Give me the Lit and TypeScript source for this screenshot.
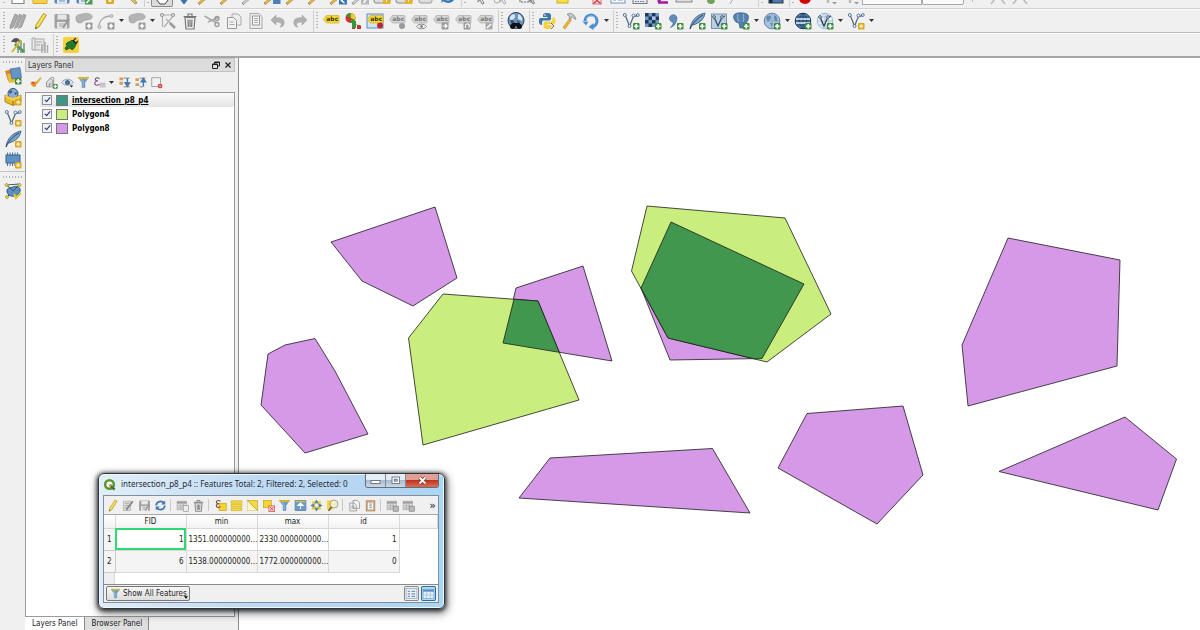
import { LitElement, html, svg, css, nothing, TemplateResult } from "lit";
import { customElement, property, state } from "lit/decorators.js";

type Art = TemplateResult<2>;

/* ---------- shared icon parts (18 x 18 grid) ---------- */
const plus = svg`<rect x="11" y="11" width="6.500" height="6.500" rx="1" fill="#3d8b3d"/><path d="M14.250 12v4.500M12 14.250h4.500" stroke="#fff" stroke-width="1.700"/>`;
const star = svg`<rect x="11" y="11" width="6.500" height="6.500" rx="1" fill="#d8a41c"/><path d="M14.250 12v4.500M12 14.250h4.500M12.700 12.700l3 3M15.700 12.700l-3 3" stroke="#fff3c0" stroke-width=".9"/>`;
const greyPlus = svg`<rect x="10.500" y="10.500" width="7" height="7" rx="1" fill="#9a9a9a"/><path d="M14 11.800v4.400M11.800 14h4.400" stroke="#fff" stroke-width="1.700"/>`;
const vee = svg`<path d="M3.500 4 7.500 14 11.500 4.500 16 3.500" fill="none" stroke="#5a6c80" stroke-width="1.3"/><g fill="#eef4fa" stroke="#456a92" stroke-width=".9"><circle cx="2.800" cy="3" r="1.500"/><circle cx="7.500" cy="14" r="1.500"/><circle cx="11.500" cy="3.600" r="1.500"/><circle cx="15.800" cy="3" r="1.400"/></g>`;
const tag = (fill: string, ink: string, edge: string) => svg`<path d="M1.500 7.500 4.500 3.500H16a1 1 0 0 1 1 1V10a1 1 0 0 1-1 1H4.500z" fill="${fill}" stroke="${edge}" stroke-width=".7"/><text x="4.300" y="9.400" font-family="DejaVu Sans, sans-serif" font-weight="bold" font-size="6" fill="${ink}">abc</text>`;
const greyTag = tag("#d4d4d4", "#777", "#aaa");
const globe = (fill: string, line: string) => svg`<circle cx="9" cy="9" r="7.800" fill="${fill}" stroke="${line}"/><path d="M1.500 9h15M9 1.200v15.600M3 5h12M3 13h12M9 1.200c-5 4-5 11.600 0 15.600M9 1.200c5 4 5 11.600 0 15.600" fill="none" stroke="${line}" stroke-width=".9"/>`;
const pencil = (body: string, tip: string) => svg`<path d="M12.500 1.500 15.500 3 8 15 4.500 17 4.800 13.200z" fill="${body}" stroke="${tip}" stroke-width=".7"/><path d="m4.500 17 .2-2 1.500.9z" fill="#444"/><path d="M13.500 2.500 6.300 14.200" stroke="#fff6b0" stroke-width=".7"/>`;
const lens = (color: string) => svg`<circle cx="11" cy="6" r="5" fill="#eef" stroke="#888"/><path d="m8.500 11-7 6" stroke="#777" stroke-width="2.500"/><path d="m9 10.500-7 6" stroke="${color}" stroke-width="2"/>`;
const funnel = svg`<path d="M2 2h14l-5 7v7H7V9z" fill="#6b9ccb" stroke="#4c7aa6" stroke-width=".6"/><path d="M1.500 1.500h15l-1 2.500h-13z" fill="#d7b62c"/><path d="m6 4 2.500 5v6.500" fill="none" stroke="#a9c9e8"/>`;
const floppy = (c: string, l: string) => svg`<rect x="1.500" y="2" width="15" height="14.500" rx="1.500" fill="${c}"/><rect x="4.500" y="2.500" width="9" height="5" fill="${l}"/><rect x="4" y="10" width="10" height="6.500" fill="${l}"/><path d="M6 12h6M6 14h6" stroke="${c}"/>`;
const bin = svg`<path d="M4 5.500h10l-1 11.500H5z" fill="#eee" stroke="#777" stroke-width="1.200"/><path d="M2.500 4.500h13M7 4V2h4v2M7 7.500l.4 7.500M9 7.500V15M11 7.500l-.4 7.500" fill="none" stroke="#777" stroke-width="1.200"/>`;
const page = svg`<path d="M3 1.500h9l3 3v12H3z" fill="#eee" stroke="#aaa"/>`;
const blob = svg`<path d="M1 6c0-4 4-3 6-4s9-1 10 2-3 4-6 4-3 3-6 3-4-2-4-5z" fill="#b4b4b4" stroke="#959595" stroke-width=".6"/>`;
const sheet = svg`<rect x="1.500" y="3" width="13" height="12" fill="#ddd" stroke="#aaa"/><path d="M1.500 5h13" stroke="#999" stroke-width="2.500"/><path d="M2 9.500h12M2 12.500h12M6 6v9M10 6v9" stroke="#aaa"/>`;
const elephant = svg`<path d="M2 3c2-3 11-3 14 0 1 3 0 6-2 8l-2-1-1 6H8l-1-5-3-1C2 8 1 5 2 3z" fill="#5682b0" stroke="#2c537e" stroke-width=".7"/><path d="M6 2c-1 3 0 6 1 8M11 2c1 3 1 5 0 8" fill="none" stroke="#a5c6e6" stroke-width=".8"/>`;
const feather = svg`<path d="M2 17C3 9 8 3 17 1c-1 7-6 10-12 12" fill="#7ea5c9" stroke="#3a5f85" stroke-width=".9"/><path d="M2 17C5 10 10 6 15 3" fill="none" stroke="#27445f"/>`;

const icons: Record<string, Art> = {
  page: svg`<path d="M3 1h12v15.500H3z" fill="#fff" stroke="#888" stroke-width="1.200"/>`,
  folder: svg`<path d="M2 5h14v11.500H2z" fill="#f6d04d" stroke="#d5a928"/>`,
  save: floppy("#5b88b5", "#e5eef6"),
  saveAs: svg`${floppy("#5b88b5", "#e5eef6")}<rect x="10" y="10" width="7.500" height="7.500" fill="#4a9a50"/><path d="m11.500 16 4.500-5" stroke="#fff" stroke-width="1.500"/>`,
  layout: svg`<rect x="6" y="4" width="8" height="13" rx="1.500" fill="#d9a92a"/><rect x="8.500" y="12" width="3" height="3" fill="#fff2bd"/>`,
  brush: svg`<path d="m4 8 9 9 2-1L7 5z" fill="#e4c25c" stroke="#8c7a40" stroke-width=".7"/>`,
  hand: svg`<path d="M3 9h12v4l-3 4H7l-4-5z" fill="#fff" stroke="#444"/>`,
  pan: svg`<path d="M9 5v9M6 13h6l-3 4z" fill="#3a71b0" stroke="#3a71b0"/>`,
  zoomY: lens("#f1b530"), zoomG: lens("#ccc"),
  zoomB: svg`${lens("#f1b530")}<rect x="10" y="9" width="7.500" height="8" fill="#4d80b8"/>`,
  zoomP: svg`${lens("#f1b530")}<rect x="10" y="9" width="8" height="8.500" fill="#3c75b0"/><path d="m15.500 11-3 2.500 3 2.500" stroke="#fff" stroke-width="1.500" fill="none"/>`,
  zoomN: svg`${lens("#ccc")}<rect x="10" y="9" width="8" height="8.500" fill="#b8b8b8"/><path d="m12.500 16 3-4" stroke="#fff" stroke-width="1.500" fill="none"/>`,
  book: svg`<rect x="1" y="8" width="16" height="8" rx="2" fill="#ddd" stroke="#888"/><rect x="10" y="9" width="7.500" height="8" fill="#e1b431"/><path d="M13.500 11v3.500" stroke="#fff"/>`,
  pill: svg`<rect x="2" y="8" width="13" height="8" rx="2" fill="#ddd" stroke="#999"/>`,
  refresh: svg`<path d="M3 9a6 6 0 0 1 11-3M15 9a6 6 0 0 1-11 3" fill="none" stroke="#3e78b4" stroke-width="2.500"/><path d="M15.500 2v5.500H10zM2.500 16v-5.500H8z" fill="#3e78b4"/>`,
  cursor: svg`<path d="m8 5 7 7-3 .3 2 4-2 .8-2-4-2 2z" fill="#eee" stroke="#777" stroke-width=".9"/>`,
  cursorG: svg`<path d="m8 5 7 7-3 .3 2 4-2 .8-2-4-2 2z" fill="#eee" stroke="#aaa" stroke-width=".9"/><circle cx="5" cy="13" r="3" fill="none" stroke="#aaa"/>`,
  select: svg`<path d="M1 7v8h12" fill="none" stroke="#666" stroke-dasharray="2 1"/><path d="m10 6 6 6-2.500.3 2 4-1.500.7-2-4-2 1.500z" fill="#fff" stroke="#666" stroke-width=".9"/>`,
  yellow: svg`<rect x="3" y="6" width="11" height="10" fill="#f8e03d" stroke="#c9ac2a"/>`,
  noSel: svg`<path d="m6 10 8 7M14 10l-8 7" stroke="#dc3440" stroke-width="1.500"/><rect x="6" y="9.500" width="8" height="7.500" fill="none" stroke="#e06a72"/>`,
  grid: svg`<rect x="2" y="4" width="14" height="12" fill="#fff" stroke="#6d93bd"/><path d="M4 10h3M9 10h5M4 13h3M9 13h5" stroke="#6d93bd"/>`,
  calc: svg`<rect x="2" y="4" width="14" height="12.500" fill="#e7edf3" stroke="#777"/><path d="M4 12h10M4 14.500h10" stroke="#58738e" stroke-dasharray="1.500 1"/>`,
  sigma: svg`<path d="M5 15.500h10M5 15l5-6" stroke="#a514a8" stroke-width="2.500"/>`,
  ruler: svg`<rect x="1" y="8" width="16" height="7" fill="#ddd" stroke="#888"/>`,
  tip: svg`<circle cx="9" cy="13" r="4" fill="#6ba45b"/><path d="M6 8h7v6z" fill="#e5c238"/>`,
  note: svg`<path d="M5 9h10l-6 3-3 5" fill="#eee" stroke="#aaa"/>`,
  help: svg`<rect x="2" y="3" width="14" height="13" fill="#4c78ac" stroke="#26384e"/><path d="M4 3v13" stroke="#1d2b3a" stroke-width="3"/>`,
  red: svg`<circle cx="7" cy="11" r="6" fill="#d40000"/>`,
  pinG: svg`<path d="M8 8v8" stroke="#bbb" stroke-width="2.500"/><path d="M12 15h5l-2.500 2.500z" fill="#999"/>`,
  tent: svg`<path d="m2 17 7-9 7 9" fill="none" stroke="#bbb" stroke-width="1.500"/>`,

  edits: svg`<path d="m6 2 3 1.500L4.500 15 1 16.500 1.500 13zM10 2l3 1.500L8.500 15 5 16.500M14 2l3 1.500L12.500 15 9 16.500" fill="#aaa" stroke="#888" stroke-width=".7"/>`,
  pencil: pencil("#f3d32d", "#98843a"),
  saveG: svg`${floppy("#a2a2a2", "#e8e8e8")}<path d="m10 16 6-9" stroke="#999" stroke-width="2"/>`,
  addPoly: svg`${blob}${greyPlus}`,
  addCurve: svg`<path d="M2 15C2 8 7 4 14 4" fill="none" stroke="#aaa" stroke-width="1.300"/><circle cx="2.500" cy="15" r="1.500" fill="#ddd" stroke="#aaa"/><circle cx="14.500" cy="4" r="1.500" fill="#ddd" stroke="#aaa"/>${greyPlus}`,
  vertex: svg`<path d="M2 3h12M3.500 3v12M5 15l9-11M7 7l5 5" stroke="#b0b0b0" stroke-width="1.200"/><circle cx="3" cy="3" r="1.600" fill="#ddd" stroke="#999"/><circle cx="14" cy="3" r="1.600" fill="#ddd" stroke="#999"/><path d="m11 11 5 5" stroke="#999" stroke-width="2.500"/>`,
  bin,
  cut: svg`<path d="m1.500 4 12 7M16 5 5 10" stroke="#aaa" stroke-width="1.800"/><circle cx="14" cy="12.500" r="2" fill="none" stroke="#999" stroke-width="1.300"/><circle cx="14" cy="6.500" r="2" fill="none" stroke="#999" stroke-width="1.300"/>`,
  copy: svg`<path d="M7 2h6l3 3v8H7z" fill="#eee" stroke="#aaa"/><path d="M2.500 5.500h6l3 3v8h-9z" fill="#f2f2f2" stroke="#999"/><path d="M4.500 10h4M4.500 12.500h5" stroke="#aaa"/>`,
  paste: svg`${page}<rect x="5.500" y="4" width="7" height="9" fill="#f6f6f6" stroke="#999"/><path d="M7 6.500h4M7 8.500h4M7 10.500h4" stroke="#aaa"/>`,
  undo: svg`<path d="M7 3v3c6-1 9 2 8 6-.5 2-2 3-4 3 3-3 1-5-4-5v3L2 8z" fill="#b0b0b0" stroke="#999" stroke-width=".5"/>`,
  redo: svg`<path d="M11 3v3C5 5 2 8 3 12c.5 2 2 3 4 3-3-3-1-5 4-5v3l5-5z" fill="#b0b0b0" stroke="#999" stroke-width=".5"/>`,
  label: tag("#f4d834", "#3a3208", "#cfae20"),
  diagram: svg`<path d="M8 11v6h3v-4h3v4h3v-3" fill="#d02a2a"/><rect x="8" y="9" width="4" height="7" fill="#2f9a3c"/><rect x="13" y="13" width="3.500" height="4" fill="#cf2d2d"/><circle cx="6.500" cy="6" r="5" fill="#d83131"/><path d="M6.500 6V1a5 5 0 0 1 4.500 7z" fill="#e9d02f"/><path d="M6.500 6 2 3.500A5 5 0 0 1 6.500 1z" fill="#2f9a3c"/><path d="M6.500 6 11 8a5 5 0 0 1-4 3z" fill="#2f9a3c"/>`,
  labelPin: svg`<rect x="1" y="2" width="16" height="14" fill="#d5e4f6" stroke="#5d8cc8"/>${tag("#f4d834", "#3a3208", "#cfae20")}<circle cx="14" cy="13.500" r="3" fill="#c3262a"/>`,
  labelDot: svg`${greyTag}<circle cx="14" cy="14" r="3" fill="#999"/>`,
  labelEye: svg`${greyTag}<path d="M6.500 14.500c2-3 8-3 10 0-2 3-8 3-10 0z" fill="#eee" stroke="#888"/><circle cx="11.500" cy="14.500" r="1.300" fill="#777"/>`,
  labelMove: svg`${greyTag}<rect x="9.500" y="10.500" width="7" height="7" rx="1" fill="#999"/><path d="M10.500 14h4m-1.500-2 2 2-2 2" fill="none" stroke="#fff" stroke-width="1.200"/>`,
  labelTurn: svg`${greyTag}<rect x="9.500" y="10.500" width="7" height="7" rx="1" fill="#999"/><path d="M11.500 16v-1.500a2 2 0 1 1 3 1" fill="none" stroke="#fff" stroke-width="1.200"/>`,
  labelEdit: svg`${greyTag}<rect x="9.500" y="10.500" width="7" height="7" rx="1" fill="#aaa"/><path d="m11 16 4-4" fill="none" stroke="#fff" stroke-width="1.500"/>`,
  search: svg`<circle cx="9" cy="8.500" r="8" fill="#6f95bd" stroke="#24415f"/><path d="M3 5c2-4 6-3 5 0s-4 4-5 2zM11 2c3 1 5 4 4 7l-4-2z" fill="#d6e5f2"/><path d="M3 8h3l2 3-3 2zM10 8l3 2-2 3z" fill="#35557a"/><path d="M3 14.500 5.500 11h7l2.500 3.500z" fill="#111"/><circle cx="5.500" cy="14.500" r="2.500" fill="#111"/><circle cx="12.500" cy="14.500" r="2.500" fill="#111"/>`,
  python: svg`<path d="M9 1c-4 0-4 1.500-4 4h4.500v1H3C1 6 .8 8 1 10s1 3 3 3V10.500C4 9 5 8.500 6 8.500h5c1.500 0 2-1 2-2V3c0-1.500-2-2-4-2z" fill="#3c78ad"/><path d="M9.500 17c4 0 4-1.500 4-4H9v-1h6.500c2 0 2.200-2 2-4s-1-3-3-3v2.500c0 1.500-1 2-2 2h-5c-1.500 0-2 1-2 2V15c0 1.500 2 2 4 2z" fill="#f5d243"/><circle cx="7" cy="3" r=".8" fill="#fff"/><path d="m13 11 3 3-3 3" stroke="#776a30" fill="none"/>`,
  hammer: svg`<path d="M9.500 6.500 11.500 8 5 17 3 15.500z" fill="#efb42e" stroke="#a87a20" stroke-width=".5"/><path d="M7 2.500C9.500.5 12 1 14.500 4l1.500 3-1 .5-3-3-1.500 2.500-1.500-1 .5-2z" fill="#c9c9c9" stroke="#777" stroke-width=".7"/>`,
  spin: svg`<path d="M3 9a6 6 0 1 1 7 6" fill="none" stroke="#4e8ed0" stroke-width="3"/><path d="m11.500 11-5 4 5 3z" fill="#4e8ed0"/><path d="M.5 9.500h6l-2.500 4z" fill="#4e8ed0"/><path d="M4.500 7A5 5 0 0 1 13 6" fill="none" stroke="#a8cdf0" stroke-width="1"/>`,
  addVec: svg`${vee}${plus}`,
  addRas: svg`<rect x="1" y="1" width="14" height="14" fill="#6f99c4"/><path d="M1 1h3.500v3.500H1zM8 1h3.500v3.500H8zM4.500 4.500H8V8H4.500zM11.500 4.500H15V8h-3.500zM1 8h3.500v3.500H1zM8 8h3.500v3.500H8zM4.500 11.500H8V15H4.500z" fill="#1f3858"/><path d="M8 4.500h3.500V8H8z" fill="#a9c5e0"/>${plus}`,
  addCsv: svg`<path d="M3.500 6a3.800 3.800 0 1 1 7 2.500c-.5 3-2.500 6-6 7 2-2 3-4 2.500-5.500C5 10 3.500 8.500 3.500 6z" fill="#5f8cba" stroke="#37618e" stroke-width=".6"/>${plus}`,
  addFeather: svg`${feather}${plus}`,
  addVirt: svg`<rect x="1.500" y="2" width="15" height="14.500" fill="#b9cfe3" stroke="#7892ab"/><path d="m4 5 4 9 4-9 3-1" fill="none" stroke="#32506f" stroke-width="1.300"/><circle cx="4" cy="5" r="1.300" fill="#fff" stroke="#456"/><circle cx="12" cy="5" r="1.300" fill="#fff" stroke="#456"/>${plus}`,
  addPg: svg`${elephant}${plus}`,
  addWms: svg`<circle cx="9" cy="9" r="7.800" fill="#a9c3dd" stroke="#5e86b0"/><path d="M3 6c1-3 5-3 5-1S6 9 5 10zM11 3c3 1 4 4 3 6s-3-1-3-3zM7 11h3l-1 4z" fill="#6489b0"/><path d="M1.500 9h15M9 1.500v15" stroke="#7fa2c6" stroke-width=".7"/>${plus}`,
  addWcs: svg`${globe("#5f8cba", "#1b3a5d")}<path d="M2 7h14M2 11h14" stroke="#dce9f5" stroke-width="1.500"/>${plus}`,
  addWfs: svg`${globe("#e9f0f8", "#9fbddb")}<path d="m4 5 4 9 4-9 3-1" fill="none" stroke="#34404c" stroke-width="1.300"/><circle cx="4" cy="5" r="1.300" fill="#fff" stroke="#456"/><circle cx="12" cy="5" r="1.300" fill="#fff" stroke="#456"/>${plus}`,
  newVec: svg`${vee}${star}`,
  tools: svg`<path d="m6 8 9 8" stroke="#4d8a4d" stroke-width="3"/><path d="M12 5v12M15 7v10M9 9v8" stroke="#6d9c75" stroke-width="1.500"/><path d="m12 4-9 12" stroke="#d4b62c" stroke-width="2"/><path d="M2 6c2-4 5-5 8-3l1 3-2-1-2 2-2-1z" fill="#555"/>`,
  toolsG: svg`<path d="M1 2h3v12H1zM4 3h9v11H4" fill="#e6e6e6" stroke="#aaa"/><path d="M5 6h6M5 9h4" stroke="#aaa"/><path d="M11 8v9M14 6v11M16.500 9v8" stroke="#aaa" stroke-width="1.500"/>`,
  plug: svg`<rect x="1" y="1" width="16" height="16" rx="2" fill="#f4d23b"/><path d="m12 4 2-2M14 7l2-2" stroke="#333" stroke-width="1.300"/><path d="M4 8c1-2 4-2 6-4l4 4c-1 3-2 5-4 6L8 12l-4 2-1-2 2-2z" fill="#1d7c2f" stroke="#0e4519" stroke-width=".7"/><path d="m11 4 3.500 4" stroke="#222" stroke-width="1.500"/>`,

  layers: svg`<path d="m1 4 8-2 3 10-8 2z" fill="#d9822b"/><path d="m3 7 8-1 1 9-7 1z" fill="#e8bd32"/><path d="m6 2 10-1.500 1.500 10L8 12z" fill="#6794c5" stroke="#3f6a98" stroke-width=".7"/>${plus}`,
  geopkg: svg`<path d="m1 7 8 3 8-3v7l-8 3.500L1 14z" fill="#e9b926" stroke="#8f6e14" stroke-width=".7"/><path d="M9 10v7.500" stroke="#8f6e14"/><circle cx="9" cy="5.500" r="5" fill="#8aaed2" stroke="#2f5379"/><path d="M5 4c1-2 4-2 3 0s-2 2-3 0zM10 5l3-1-1 3z" fill="#2f5379"/><path d="m1 7 8 3 8-3-1 3-7 3-7-3z" fill="#f5cf48"/>${star}`,
  newFeather: svg`${feather}${star}`,
  chip: svg`<rect x="2" y="4" width="14" height="8" fill="#6190c2" stroke="#3b638d"/><path d="M3.500 1.500v3M6 1.500v3M8.500 1.500v3M11 1.500v3M13.500 1.500v3M3.500 12v3M6 12v3M8.500 12v3M11 12v3" stroke="#47719c"/>${star}`,
  topo: svg`<path d="M2.500 3 15.500 2M3 15l6-6" fill="none" stroke="#555"/><path d="M3 9c0-4 4-3 6-4s6-1 7 2-2 6-6 7-7-2-7-5z" fill="#5d8fc4" stroke="#2e5783"/><path d="m2.500 3 7 6 6-7" fill="none" stroke="#456"/><g fill="#f3d936" stroke="#8f7d1e" stroke-width=".6"><circle cx="2.500" cy="3" r="1.500"/><circle cx="15.500" cy="3" r="1.500"/><circle cx="3" cy="15" r="1.500"/></g><path d="m10 12 2 4 5-5" fill="none" stroke="#e3c62b" stroke-width="2"/>`,

  style: svg`<path d="m9 9 7-7 1 1-6 8z" fill="#e9c039" stroke="#a98322" stroke-width=".5"/><path d="m2 9 9-1-2 7c-3 0-6-1-7-6z" fill="#e88a2a"/><path d="M3 8h5l-2 3z" fill="#d4453a"/>`,
  addGroup: svg`<path d="M2 15V9l5-6 4 3v9zM6 15v-4h3" fill="#ddd" stroke="#777"/><path d="M8 2h4v10" fill="none" stroke="#888"/>${plus}`,
  eye: svg`<path d="M1 9c3-6 13-6 16 0-3 5-13 5-16 0z" fill="#dfe8f0" stroke="#76899a"/><circle cx="9" cy="9" r="3.500" fill="#476f96"/><path d="M12 13h5l-2.500 3z" fill="#222"/>`,
  funnel,
  epsilon: svg`<path d="M9 4C6 1 2 3 3.500 5.500 4 7 7 7 7 7 2 7 1 11 4 12.500c2 .5 4 0 5-1.500" fill="none" stroke="#7d4585" stroke-width="1.500"/><path d="M10 16v-6h2.500v6M14 16v-6h2.500v6" fill="none" stroke="#999"/>`,
  expand: svg`<path d="M2 2h5v4H2zM2 8h5v4H2z" fill="#dd9a55"/><path d="M8 3h8M8 15h8M9 9h3" stroke="#555"/><path d="M13 3v7M10 9.500h6l-3 4.500z" fill="#4379b3" stroke="#4379b3" stroke-width="2"/>`,
  collapse: svg`<path d="M2 3h5v4H2zM2 10h5v4H2z" fill="#dd9a55"/><path d="M8 3h8M8 15h4" stroke="#555"/><path d="M13 15V8M10 8h6l-3-4.500z" fill="#4379b3" stroke="#4379b3" stroke-width="2"/>`,
  remove: svg`<rect x="2.500" y="2.500" width="12" height="12" fill="#f4f4f4" stroke="#888"/><rect x="11" y="11" width="6" height="6" rx="2" fill="#d93a3a"/><path d="M12.500 14h3" stroke="#fff" stroke-width="1.300"/>`,

  editG: svg`<path d="M2 3h10v13H2z" fill="#ddd" stroke="#aaa"/><path d="M4 6h6M4 9h6M4 12h5" stroke="#999"/><path d="m6 15 9-12" stroke="#888" stroke-width="2.500"/>`,
  sheetG: svg`${sheet}<rect x="10" y="9" width="7" height="8" fill="#eee" stroke="#999"/>`,
  selExpr: svg`<rect x="7" y="6" width="10" height="10" fill="#f4d432" stroke="#c9a720"/><path d="M9 3C5 1 2 3 4 6c0 0 2 .5 3 .5-4 0-5 4-2 5 2 .5 3 0 4-1" fill="none" stroke="#7a4a34" stroke-width="1.500"/>`,
  selAll: svg`<path d="M1.500 2.500h15v3.500h-15zM1.500 7.500h15V11h-15zM1.500 12.500h15V16h-15z" fill="#f7da2e" stroke="#c8aa20" stroke-width=".8"/>`,
  invert: svg`<rect x="2" y="2" width="14" height="14" fill="#f5da3b" stroke="#c0ab4a"/><path d="M2 2v14h14z" fill="#fff6c8"/><path d="m2 2 14 14" stroke="#a68f2b"/>`,
  desel: svg`<rect x="2" y="2" width="11" height="10" fill="#f4d432" stroke="#c9a720"/><rect x="9.500" y="9.500" width="8" height="8" fill="#f6dcdc" stroke="#d94444"/><path d="m11 11 5 5M16 11l-5 5" stroke="#d94444" stroke-width="1.300"/>`,
  toTop: svg`<rect x="1.500" y="2" width="15" height="14" fill="#6c9aca" stroke="#5b7ea3"/><path d="M2 3.500h14" stroke="#d9b945" stroke-width="2"/><path d="M9 14V8M5.500 9 9 5.500 12.500 9z" fill="#fff" stroke="#fff" stroke-width="1.500"/>`,
  panTo: svg`<path d="m9 1 3.500 4h-7zM9 17l3.500-4h-7zM1 9l4-3.500v7zM17 9l-4-3.500v7z" fill="#4a7fb9"/><path d="M3 3h5v5H3zM10 3h5v5h-5zM3 10h5v5H3zM10 10h5v5h-5z" fill="#f1cf33"/><path d="m9 2 3 4H6zM9 16l3-4H6zM2 9l4-3v6zM16 9l-4-3v6z" fill="#4a7fb9"/>`,
  zoomSel: svg`<rect x="1.500" y="2" width="8" height="13" fill="#f4d432"/><circle cx="11" cy="7" r="5.500" fill="#f4efc8" stroke="#888"/><path d="m7.500 11-4 5.500" stroke="#555" stroke-width="2"/>`,
  copyD: svg`<path d="M7 2h6l3 3v8H7zM2.500 5.500h6l3 3v8h-9z" fill="#f2f2f2" stroke="#888"/><path d="M4.500 10h4M4.500 12.500h5" stroke="#888"/>`,
  clip: svg`<rect x="3" y="2.500" width="12" height="14" fill="#e6b478" stroke="#a67c4c"/><rect x="5" y="4.500" width="8" height="10.500" fill="#fafafa" stroke="#aaa"/><path d="M7 7h4M7 9.500h4M7 12h4" stroke="#777"/>`,
  colG: svg`${sheet}<rect x="10" y="10" width="7" height="7" fill="#bbb" stroke="#888"/>`,
  form: svg`<rect x="1.500" y="2" width="15" height="14" fill="#e8f0f8" stroke="#8aa3bd"/><path d="M4 6h3M4 9.500h3M4 13h3M9 6h5M9 9.500h5M9 13h5" stroke="#7795b5" stroke-width="1.500"/>`,
  table: svg`<rect x="1.500" y="3" width="15" height="13" fill="#e4f1fb" stroke="#6d9cc9"/><path d="M1.500 5h15" stroke="#5a8fc4" stroke-width="3"/><path d="M6.500 6v10M11.500 6v10M2 11h14" stroke="#9dbbd8"/>`,
  logo: svg`<circle cx="9" cy="9" r="6" fill="#fff" stroke="#5b9632" stroke-width="3.500"/><path d="m9.500 9.500 6.500 6.500" stroke="#3f7a2c" stroke-width="3.500"/><path d="m9 9 4 .3-3.500 3.500z" fill="#e9963a"/>`,
};

@customElement("gis-tool")
class GisTool extends LitElement {
  @property() icon = "";
  @property() name = "";
  @property({ type: Boolean }) menu = false;
  @property({ type: Boolean }) pressed = false;
  static styles = css`
    :host { display: inline-flex; flex: none; }
    button {
      display: inline-flex; align-items: center; justify-content: center;
      width: var(--tool-width, 22px); height: var(--tool-height, 22px);
      padding: 0; border: 0; border-radius: 2px; background: none;
    }
    button.pressed { background: #dcdcdc; box-shadow: inset 0 0 0 1px #8b8b8b; }
    button.arrow { width: 9px; }
    .icon { width: var(--icon-size, 18px); height: var(--icon-size, 18px); flex: none; }
    .caret { width: 5px; height: 3px; }
  `;
  render() {
    return html`<button class=${this.pressed ? "pressed" : ""} aria-label=${this.name || this.icon}>
        <svg class="icon" viewBox="0 0 18 18">${icons[this.icon]}</svg>
      </button>${this.menu
        ? html`<button class="arrow" aria-label="${this.name || this.icon} menu">
            <svg class="caret" viewBox="0 0 5 3"><path d="M0 0h5L2.500 3z" fill="#333" /></svg>
          </button>`
        : nothing}`;
  }
}

/* "name+" has a drop-down arrow, "name!" is held down, a number is a gap in pixels, "|" a divider */
const tools = (list: string) =>
  list.split(" ").map((t) => {
    if (t === "|") return html`<span class="divider"></span>`;
    if (/^\d+$/.test(t)) return html`<span style="width:${t}px"></span>`;
    return html`<gis-tool icon=${t.replace(/[+!]/, "")} ?menu=${t.endsWith("+")} ?pressed=${t.endsWith("!")}></gis-tool>`;
  });

@customElement("gis-map")
class GisMap extends LitElement {
  static styles = css`
    :host { display: block; background: #fff; overflow: hidden; }
    svg { display: block; width: 100%; }
    polygon { stroke: #1c1c1c; stroke-width: 0.8; }
    .purple { fill: #d699e8; }
    .lime { fill: #c9ee7e; }
    .green { fill: #42974e; }
  `;
  private shapes: [string, string[]][] = [
    ["purple", [
      "331,242 435,207 457,278 413,306 362,281",
      "285,345 315,338.500 335,371 368,434 305,453 261,405 268,354",
      "516,288 583,266 612,361 503,343",
      "671,222 804,284 762,358.500 670,360 641,288",
      "1008,238 1120,260 1117,366 968,406 962,345",
      "807,413.500 903,406 923,475 877,524 778,468",
      "1125,417 1176.500,459 1158,510 999,471.500",
      "550,458 712.500,448.500 750,513 519,498",
    ]],
    ["lime", [
      "443,294 538,301 579,400 423,445 408.500,338",
      "647,206 785,218 831,314 767,362 668,338 631.500,271",
    ]],
    ["green", [
      "514,299.200 538,301 559.300,352.300 503,343",
      "671,222 804,284 762,358.500 754,358.800 668,338 641,288",
    ]],
  ];
  render() {
    return html`<svg viewBox="239 58 961 572" role="img" aria-label="Map canvas">
      ${this.shapes.map(([c, list]) => list.map((p) => svg`<polygon class=${c} points=${p} />`))}
    </svg>`;
  }
}

@customElement("gis-layers")
class GisLayers extends LitElement {
  @state() private layers = [
    { name: "intersection_p8_p4", color: "#3c9684", current: true },
    { name: "Polygon4", color: "#c9ee7e", current: false },
    { name: "Polygon8", color: "#d699e8", current: false },
  ];
  static styles = css`
    :host { display: flex; flex-direction: column; --tool-width: 16px; --tool-height: 20px; --icon-size: 13px; }
    header {
      display: flex; align-items: center; height: 14px; padding: 0 2px; margin-right: 2px;
      box-sizing: border-box; border: 1px solid #c2c2c2; background: #dcdcdc; color: #333;
    }
    h2 { flex: 1; margin: 0; font-size: 8px; font-weight: normal; }
    header button { display: flex; padding: 0; margin-left: 4px; border: 0; background: none; }
    header svg { width: 8px; height: 8px; }
    .tools { display: flex; height: 20px; padding-left: 2px; }
    ul {
      flex: 1; margin: 0 2px 0 0; padding: 0 0 0 14px; list-style: none;
      border: 1px solid #9a9a9a; background: #fff;
    }
    li { display: flex; align-items: center; height: 14px; padding-left: 2px; gap: 4px; border-radius: 2px; }
    li.current { background: linear-gradient(#fafafa, #e4e4e4); }
    li.current label { text-decoration: underline; }
    label { font-size: 8px; font-weight: bold; color: #000; }
    input {
      appearance: none; display: flex; justify-content: center; box-sizing: border-box; width: 10px; height: 10px; margin: 0;
      border: 1px solid #8e8f8f; background: #eef2f6;
    }
    input:checked::before {
      content: ""; width: 2px; height: 5px; border: solid #1e2f74; border-width: 0 1px 1px 0; transform: rotate(40deg);
    }
    .swatch { width: 12px; height: 11px; box-sizing: border-box; border: 1px solid #777; }
    nav { display: flex; height: 13px; }
    nav button {
      padding: 0 6px; border: 1px solid #8a8a8a; border-width: 0 1px 0 0;
      font: inherit; font-size: 8px; color: #222; background: #dedede;
    }
    nav button.on { padding: 0 7px; background: #fff; }
  `;
  render() {
    return html`
      <header>
        <h2>Layers Panel</h2>
        <button aria-label="Float panel"><svg viewBox="0 0 8 8"><path d="M2.500 3V1h5v4h-2M.5 3h5v4.500h-5zM.5 3.500h5M2.500 1.500h5" fill="none" stroke="#222" /></svg></button>
        <button aria-label="Close panel"><svg viewBox="0 0 8 8"><path d="m1.500 1.500 5 5M6.500 1.500l-5 5" stroke="#222" stroke-width="1.300" /></svg></button>
      </header>
      <div class="tools">${tools("style addGroup eye funnel epsilon+ expand collapse remove")}</div>
      <ul>
        ${this.layers.map((l, i) => html`<li class=${l.current ? "current" : ""}>
          <input type="checkbox" id="layer${i}" checked />
          <span class="swatch" style="background:${l.color}"></span>
          <label for="layer${i}">${l.name}</label>
        </li>`)}
      </ul>
      <nav><button class="on">Layers Panel</button><button>Browser Panel</button></nav>`;
  }
}

@customElement("gis-attributes")
class GisAttributes extends LitElement {
  private rows = [
    ["1", "1351.000000000…", "2330.000000000…", "1"],
    ["6", "1538.000000000…", "1772.000000000…", "0"],
  ];
  static styles = css`
    :host {
      display: block; box-sizing: border-box; width: 347px; padding: 0 5px 5px 4px; border: 1px solid #2d3640; border-radius: 6px;
      background: linear-gradient(100deg, #e3effa, #bfdaf2 45%, #b4d4f2 80%, #a6d8f2);
      box-shadow: inset 0 0 0 1px #eef7ff, 0 1px 4px 1px rgba(0, 0, 0, 0.75), 1px 3px 9px 2px rgba(0, 0, 0, 0.4);
      --tool-width: 16px; --tool-height: 18px; --icon-size: 13px;
    }
    header { display: flex; height: 21px; }
    header .logo { width: 13px; height: 13px; margin: 4px 5px 0 0; }
    h2 { flex: 1; margin: 0; font: 8px/19px "Noto Sans", sans-serif; color: #1d2b38; white-space: nowrap; }
    .controls { display: flex; flex: none; height: 13px; border: 1px solid #5f6f80; border-top: 0; border-radius: 0 0 3px 3px; overflow: hidden; }
    .controls button {
      display: flex; align-items: center; justify-content: center; width: 20px; padding: 0;
      border: 0; border-right: 1px solid #7d8c9b; background: linear-gradient(#e4edf6 45%, #a9bbcc 50%, #c9dbea);
    }
    .controls button:last-child { width: 32px; border: 0; background: linear-gradient(#e0a095 45%, #bd3623 50%, #dd6e50); }
    .controls svg { width: 11px; height: 9px; }
    .body { border: 1px solid #7f8f9f; background: #f0f0f0; }
    .tools { display: flex; align-items: center; height: 18px; }
    .divider { width: 1px; height: 12px; margin: 0 3px 0 2px; background: #c8c8c8; }
    .more { margin-left: auto; padding: 0 2px; border: 0; background: none; font: 11px "DejaVu Sans", sans-serif; color: #222; }
    .grid { display: flex; flex-direction: column; height: 71px; background: #fff; border-bottom: 1px solid #8a8a8a; border-top: 1px solid #a8a8a8; box-sizing: border-box; }
    table { width: 100%; border-collapse: collapse; table-layout: fixed; font-size: 8px; color: #222; }
    th, td { box-sizing: border-box; padding: 0 2px; font-weight: normal; white-space: nowrap; overflow: hidden; }
    thead th { height: 13px; border-right: 1px solid #d8d8d8; border-bottom: 1px solid #d8d8d8; background: linear-gradient(#fff, #f2f2f2); }
    tbody th { padding: 0; background: #f4f4f4; border-right: 1px solid #ccc; border-bottom: 1px solid #ccc; }
    td { height: 22px; text-align: right; border-right: 1px solid #d8d8d8; border-bottom: 1px solid #d8d8d8; }
    tr:nth-child(2) td { background: #f4f4f4; }
    tbody td:last-child, tr:nth-child(2) td:last-child { background: #fff; border: 0; }
    td.focus { outline: 2px solid #2fd873; outline-offset: -2px; }
    .head { width: 11px; }
    .field { width: 71px; }
    .stub { flex: 1; width: 10px; background: #efefef; border-right: 1px solid #d8d8d8; }
    footer { display: flex; align-items: center; gap: 2px; height: 17px; padding: 0 2px; --tool-width: 15px; --tool-height: 15px; --icon-size: 13px; }
    footer .show {
      display: flex; align-items: center; gap: 2px; height: 15px; padding: 0 1px 0 3px; margin-right: auto;
      border: 1px solid #777; border-radius: 2px; background: linear-gradient(#f6f6f6, #dedede); font: inherit; font-size: 8px; color: #222;
    }
    .show svg { width: 11px; height: 11px; }
    .show .caret { width: 4px; height: 3px; margin: 7px 0 0 -5px; }
    footer gis-tool { border-radius: 2px; box-shadow: 0 0 0 1px #888 inset; }
    footer gis-tool:last-child { background: #b7dbf3; box-shadow: 0 0 0 1px #24719f inset; }
  `;
  render() {
    return html`
      <header>
        <svg class="logo" viewBox="0 0 18 18">${icons.logo}</svg>
        <h2>intersection_p8_p4 :: Features Total: 2, Filtered: 2, Selected: 0</h2>
        <div class="controls">
          <button aria-label="Minimize"><svg viewBox="0 0 11 9"><rect x="1" y="4.500" width="9" height="3" fill="#fff" stroke="#56616d" stroke-width=".8" /></svg></button>
          <button aria-label="Maximize"><svg viewBox="0 0 11 9"><rect x="2" y="1" width="7.500" height="6.500" fill="#fff" stroke="#56616d" stroke-width=".8" /><rect x="4.200" y="3.200" width="3" height="2" fill="#bccddd" stroke="#56616d" stroke-width=".8" /></svg></button>
          <button aria-label="Close"><svg viewBox="0 0 11 9"><path d="m2.500 1.500 6 6M8.500 1.500l-6 6" stroke="#6b2a22" stroke-width="3.200" /><path d="m2.500 1.500 6 6M8.500 1.500l-6 6" stroke="#fff" stroke-width="2" /></svg></button>
        </div>
      </header>
      <div class="body">
        <div class="tools">
          ${tools("pencil editG saveG refresh | sheetG bin | selExpr selAll invert desel funnel toTop panTo zoomSel | copyD clip | colG colG")}
          <button class="more" aria-label="More tools">»</button>
        </div>
        <div class="grid">
          <table>
            <thead>
              <tr><th class="head"></th><th class="field">FID</th><th class="field">min</th><th class="field">max</th><th class="field">id</th><th></th></tr>
            </thead>
            <tbody>
              ${this.rows.map((r, i) => html`<tr>
                <th>${i + 1}</th>
                ${r.map((v, j) => html`<td class=${i === 0 && j === 0 ? "focus" : ""}>${v}</td>`)}
                <td></td>
              </tr>`)}
            </tbody>
          </table>
          <div class="stub"></div>
        </div>
        <footer>
          <button class="show">
            <svg viewBox="0 0 18 18">${icons.funnel}</svg>Show All Features
            <svg class="caret" viewBox="0 0 5 3"><path d="M0 0h5L2.500 3z" /></svg>
          </button>
          <gis-tool icon="form" name="Form view"></gis-tool>
          <gis-tool icon="table" name="Table view"></gis-tool>
        </footer>
      </div>`;
  }
}

@customElement("app-root")
class AppRoot extends LitElement {
  static styles = css`
    :host {
      display: flex; flex-direction: column; position: relative; height: 100vh; overflow: hidden;
      background: #f0f0f0; font-family: "DejaVu Sans Condensed", "Noto Sans", sans-serif; font-size: 8px;
    }
    .bar { display: flex; flex: none; align-items: center; height: 24px; box-sizing: border-box; border-bottom: 1px solid #bdbdbd; box-shadow: inset 0 1px #fafafa; }
    .bar.clipped { height: 9px; align-items: flex-end; overflow: hidden; border-color: #d0d0d0; box-shadow: none; padding-bottom: 1px; }
    .group { display: flex; align-items: center; padding-right: 2px; }
    .group + .group { box-shadow: inset 1px 0 #cfcfcf; }
    .handle { width: 2px; height: 18px; margin: 0 2px 0 3px; background: repeating-linear-gradient(#b4b4b4 0 1px, transparent 1px 3px); }
    .line { width: 1px; height: 12px; margin: 0 14px 0 8px; background: #bbb; }
    .bar select, .bar input { box-sizing: border-box; height: 18px; border: 1px solid #aaa; background: #fafafa; font-size: 8px; }
    .bar select { width: 60px; }
    .bar input { width: 42px; border-radius: 2px; }
    .bar.last { border-bottom: 2px solid #a6a6a6; height: 25px; }
    .work { display: flex; flex: 1; min-height: 0; }
    .side { display: flex; flex-direction: column; align-items: center; width: 25px; padding-top: 3px; --tool-height: 21px; }
    .grip { width: 20px; height: 2px; margin-bottom: 2px; background: repeating-linear-gradient(90deg, #b4b4b4 0 1px, transparent 1px 3px); }
    .rule { width: 25px; height: 1px; margin: 1px 0 4px; background: #c4c4c4; }
    gis-layers { width: 212px; }
    gis-map { flex: 1; border-left: 1px solid #8e8e8e; margin-left: 1px; }
    gis-attributes { position: absolute; left: 98px; top: 473px; }
  `;
  private group(list: string, rest: unknown = nothing) {
    return html`<div class="group"><span class="handle"></span>${tools(list)}${rest}</div>`;
  }
  render() {
    return html`
      <div class="bar clipped">
        ${this.group("page folder save saveAs 3 layout brush")}
        ${this.group("hand! pan zoomY zoomY zoomG zoomB zoomY zoomY zoomP zoomN book book pill refresh")}
        ${this.group("cursor cursorG 5 select 13 yellow 11 noSel grid calc sigma ruler 5 tip note 12")}
        ${this.group("help")}
        ${this.group("red pinG pinG", html`<select aria-label="Scale"></select><input aria-label="Rotation" /><span class="line"></span>${tools("tent tent")}`)}
      </div>
      <div class="bar">
        ${this.group("edits pencil saveG addPoly addCurve+ addPoly+ vertex bin cut copy paste undo redo")}
        ${this.group("label diagram labelPin labelDot labelEye labelMove labelTurn labelEdit")}
        ${this.group("search")}
        ${this.group("python hammer spin+")}
        ${this.group("addVec addRas addCsv addFeather addVirt addPg+ addWms+ addWcs addWfs+ newVec+")}
      </div>
      <div class="bar last">${this.group("tools toolsG")}${this.group("plug")}</div>
      <div class="work">
        <aside class="side">
          <span class="grip"></span>
          ${tools("layers geopkg newVec newFeather chip")}
          <span class="rule"></span><span class="grip"></span>
          ${tools("topo")}
        </aside>
        <gis-layers></gis-layers>
        <gis-map></gis-map>
      </div>
      <gis-attributes></gis-attributes>`;
  }
}
